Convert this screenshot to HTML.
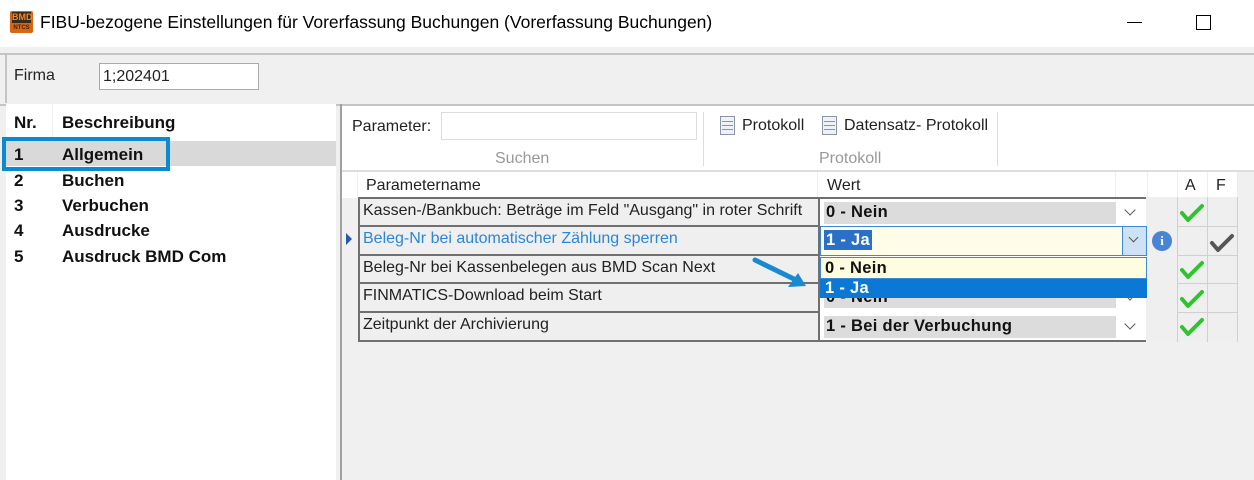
<!DOCTYPE html>
<html><head><meta charset="utf-8"><style>
*{box-sizing:border-box;margin:0;padding:0}
body{width:1254px;height:480px;overflow:hidden;background:#f0f0f0;font-family:"Liberation Sans",sans-serif;font-size:16px;color:#111;position:relative}
.a{position:absolute;white-space:nowrap}
.b{font-weight:bold}
.l{font-size:17px;font-weight:bold;line-height:18px}
.p{font-size:16px;color:#222}
.w{font-size:16.5px;font-weight:bold;letter-spacing:0.3px}
</style></head><body>
<div class="a" style="left:0;top:0;width:1254px;height:47px;background:#fff"></div>
<div class="a" style="left:10px;top:11px;width:23px;height:22px;background:#d9660f;border-radius:2px"></div>
<div class="a" style="left:12px;top:12px;width:19px;height:11px;background:#3a2a1a;color:#f08a2a;font-size:9px;font-weight:bold;text-align:center;line-height:11px">BMD</div>
<div class="a" style="left:12px;top:24px;width:19px;height:8px;color:#3a2a1a;font-size:6px;font-weight:bold;text-align:center;line-height:8px">NTCS</div>
<div class="a" style="left:40px;top:12px;font-size:17.5px;color:#000">FIBU-bezogene Einstellungen für Vorerfassung Buchungen (Vorerfassung Buchungen)</div>
<div class="a" style="left:1127px;top:22px;width:15px;height:1px;background:#000"></div>
<div class="a" style="left:1196px;top:15px;width:15px;height:15px;border:1px solid #000"></div>
<div class="a" style="left:0;top:53px;width:1254px;height:2px;background:#c4c4c4"></div>
<div class="a" style="left:5px;top:53px;width:2px;height:50px;background:#c4c4c4"></div>
<div class="a p" style="left:14px;top:67px">Firma</div>
<div class="a p" style="left:99px;top:63px;width:160px;height:27px;background:#fff;border:1px solid #aaa;padding:4px 3px">1;202401</div>
<div class="a" style="left:0;top:104px;width:1254px;height:2px;background:#c4c4c4"></div>
<div class="a" style="left:6px;top:104px;width:330px;height:376px;background:#fff"></div>
<div class="a" style="left:52px;top:104px;width:1px;height:36px;background:#eee"></div>
<div class="a l" style="left:14px;top:114px">Nr.</div>
<div class="a l" style="left:62px;top:114px">Beschreibung</div>
<div class="a" style="left:6px;top:141px;width:330px;height:25px;background:#d9d9d9"></div>
<div class="a" style="left:2px;top:137px;width:168px;height:34px;border:4px solid #0a8ad0"></div>
<div class="a l" style="left:14px;top:146px">1</div>
<div class="a l" style="left:62px;top:146px">Allgemein</div>
<div class="a l" style="left:14px;top:172px">2</div>
<div class="a l" style="left:62px;top:172px">Buchen</div>
<div class="a l" style="left:14px;top:197px">3</div>
<div class="a l" style="left:62px;top:197px">Verbuchen</div>
<div class="a l" style="left:14px;top:222px">4</div>
<div class="a l" style="left:62px;top:222px">Ausdrucke</div>
<div class="a l" style="left:14px;top:248px">5</div>
<div class="a l" style="left:62px;top:248px">Ausdruck BMD Com</div>
<div class="a" style="left:340px;top:104px;width:2px;height:376px;background:#a0a0a0"></div>
<div class="a" style="left:342px;top:106px;width:912px;height:66px;background:#fff;border-bottom:2px solid #ddd"></div>
<div class="a p" style="left:352px;top:118px">Parameter:</div>
<div class="a" style="left:441px;top:112px;width:256px;height:28px;border:1px solid #ddd;background:#fff"></div>
<div class="a p" style="left:495px;top:150px;color:#999">Suchen</div>
<div class="a" style="left:703px;top:112px;width:1px;height:54px;background:#ddd"></div>
<div class="a" style="left:720px;top:116px;width:15px;height:19px;border:1px solid #8a96a8;background:#eef2f7"></div>
<div class="a" style="left:722px;top:121px;width:11px;height:1px;background:#8a96a8;box-shadow:0 4px 0 #8a96a8,0 8px 0 #8a96a8"></div>
<div class="a p" style="left:742px;top:117px">Protokoll</div>
<div class="a" style="left:822px;top:116px;width:15px;height:19px;border:1px solid #8a96a8;background:#eef2f7"></div>
<div class="a" style="left:824px;top:121px;width:11px;height:1px;background:#8a96a8;box-shadow:0 4px 0 #8a96a8,0 8px 0 #8a96a8"></div>
<div class="a p" style="left:844px;top:117px">Datensatz- Protokoll</div>
<div class="a p" style="left:819px;top:150px;color:#999">Protokoll</div>
<div class="a" style="left:997px;top:112px;width:1px;height:54px;background:#ddd"></div>
<div class="a" style="left:342px;top:172px;width:895px;height:26px;background:#fff"></div>
<div class="a" style="left:357px;top:172px;width:1px;height:26px;background:#eee"></div>
<div class="a" style="left:817px;top:172px;width:1px;height:26px;background:#eee"></div>
<div class="a" style="left:1115px;top:172px;width:1px;height:26px;background:#eee"></div>
<div class="a" style="left:1147px;top:172px;width:1px;height:26px;background:#eee"></div>
<div class="a" style="left:1177px;top:172px;width:1px;height:26px;background:#eee"></div>
<div class="a" style="left:1207px;top:172px;width:1px;height:26px;background:#eee"></div>
<div class="a" style="left:1237px;top:172px;width:1px;height:26px;background:#eee"></div>
<div class="a p" style="left:366px;top:177px">Parametername</div>
<div class="a p" style="left:827px;top:177px">Wert</div>
<div class="a p" style="left:1185px;top:177px">A</div>
<div class="a p" style="left:1216px;top:177px">F</div>
<div class="a" style="left:358px;top:197px;width:462px;height:145px;border:2px solid #707070;background:#efefef"></div>
<div class="a" style="left:358px;top:225px;width:462px;height:2px;background:#707070"></div>
<div class="a" style="left:358px;top:254px;width:462px;height:2px;background:#707070"></div>
<div class="a" style="left:358px;top:282px;width:462px;height:2px;background:#707070"></div>
<div class="a" style="left:358px;top:311px;width:462px;height:2px;background:#707070"></div>
<div class="a" style="left:346px;top:233px;width:0;height:0;border-left:6px solid #2a5aa8;border-top:6px solid transparent;border-bottom:6px solid transparent"></div>
<div class="a p" style="left:363px;top:202px">Kassen-/Bankbuch: Beträge im Feld "Ausgang" in roter Schrift</div>
<div class="a p" style="left:363px;top:230px;color:#2a86d8">Beleg-Nr bei automatischer Zählung sperren</div>
<div class="a p" style="left:363px;top:259px">Beleg-Nr bei Kassenbelegen aus BMD Scan Next</div>
<div class="a p" style="left:363px;top:287px">FINMATICS-Download beim Start</div>
<div class="a p" style="left:363px;top:316px">Zeitpunkt der Archivierung</div>
<div class="a" style="left:820px;top:197px;width:327px;height:145px;background:#fff;border-top:2px solid #707070;border-bottom:2px solid #707070"></div>
<div class="a" style="left:1146px;top:197px;width:91px;height:145px;background:#efefef"></div>
<div class="a" style="left:1177px;top:197px;width:1px;height:145px;background:#d0d0d0"></div>
<div class="a" style="left:1207px;top:197px;width:1px;height:145px;background:#d0d0d0"></div>
<div class="a" style="left:1237px;top:197px;width:1px;height:145px;background:#d0d0d0"></div>
<div class="a" style="left:1177px;top:226px;width:60px;height:1px;background:#d0d0d0;box-shadow:0 29px 0 #d0d0d0,0 57px 0 #d0d0d0,0 86px 0 #d0d0d0"></div>
<div class="a" style="left:824px;top:202px;width:292px;height:22px;background:#dcdcdc"></div>
<div class="a w" style="left:826px;top:203px">0 - Nein</div>
<div class="a" style="left:1126px;top:206px;width:8px;height:8px;border-right:1.5px solid #555;border-bottom:1.5px solid #555;transform:rotate(45deg)"></div>
<div class="a" style="left:824px;top:288px;width:292px;height:20px;background:#dcdcdc"></div>
<div class="a w" style="left:826px;top:288px">0 - Nein</div>
<div class="a" style="left:1126px;top:291px;width:8px;height:8px;border-right:1.5px solid #555;border-bottom:1.5px solid #555;transform:rotate(45deg)"></div>
<div class="a" style="left:824px;top:316px;width:292px;height:22px;background:#dcdcdc"></div>
<div class="a w" style="left:826px;top:317px">1 - Bei der Verbuchung</div>
<div class="a" style="left:1126px;top:320px;width:8px;height:8px;border-right:1.5px solid #555;border-bottom:1.5px solid #555;transform:rotate(45deg)"></div>
<div class="a" style="left:820px;top:226px;width:327px;height:30px;background:#fffde8;border:1px solid #3a8ad8"></div>
<div class="a" style="left:1122px;top:227px;width:24px;height:28px;background:#cfe2f5;border-left:1px solid #3a8ad8"></div>
<div class="a" style="left:1130px;top:234px;width:7px;height:7px;border-right:1.5px solid #555;border-bottom:1.5px solid #555;transform:rotate(45deg)"></div>
<div class="a w" style="left:824px;top:230px;height:20px;padding:0 2px;background:#2a70c8;color:#fff;line-height:20px">1 - Ja</div>
<div class="a" style="left:1152px;top:231px;width:20px;height:20px;border-radius:50%;background:#4a84d4;color:#fff;font-size:13px;font-weight:bold;text-align:center;line-height:20px;font-family:'Liberation Serif',serif">i</div>
<div class="a" style="left:820px;top:257px;width:327px;height:22px;background:#fffde0;border:1px solid #3a8ad8"></div>
<div class="a w" style="left:825px;top:259px">0 - Nein</div>
<div class="a" style="left:820px;top:279px;width:327px;height:19px;background:#0a78d4"></div>
<div class="a w" style="left:825px;top:279px;color:#fff">1 - Ja</div>
<svg class="a" style="left:1178px;top:198px" width="30" height="145" viewBox="0 0 30 145">
<g fill="none" stroke="#2ec42e" stroke-width="4" stroke-linecap="round" stroke-linejoin="round">
<path d="M4 15 L10 22 L24 8"/><path d="M4 72 L10 79 L24 65"/><path d="M4 101 L10 108 L24 94"/><path d="M4 129 L10 136 L24 122"/></g></svg>
<svg class="a" style="left:1208px;top:228px" width="30" height="28"><path d="M4 15 L10 22 L24 8" fill="none" stroke="#555" stroke-width="4" stroke-linecap="round" stroke-linejoin="round"/></svg>
<svg class="a" style="left:750px;top:255px" width="70" height="40"><path d="M5 5 L46 25" stroke="#1a8ad0" stroke-width="5" stroke-linecap="round"/><path d="M56 31 L38 32 L48 18 Z" fill="#1a8ad0"/></svg>
</body></html>
